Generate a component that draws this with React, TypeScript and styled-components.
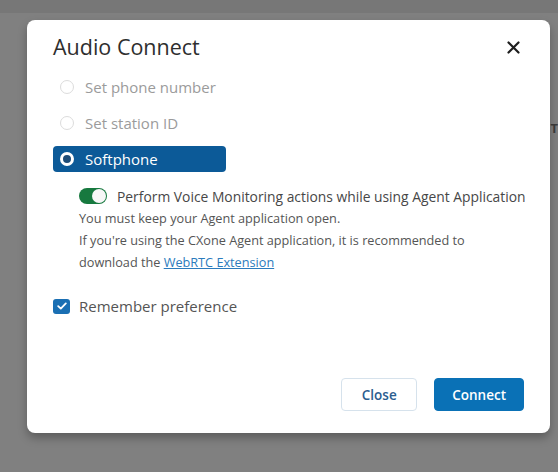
import React from "react";
import styled, { createGlobalStyle } from "styled-components";

const GlobalStyle = createGlobalStyle`
  html, body { margin: 0; padding: 0; }
  body {
    background: #808080;
    font-family: "Open Sans", "Noto Sans", sans-serif;
    -webkit-font-smoothing: antialiased;
  }
  * { box-sizing: border-box; }
`;

const Page = styled.div`
  position: relative;
  width: 558px;
  height: 472px;
  overflow: hidden;
  background: #808080;
`;

const TopBar = styled.div`
  height: 13px;
  background: #777777;
`;

const BackdropRow = styled.div`
  display: flex;
  justify-content: flex-end;
  padding-top: 107px;
  padding-right: 0;
  font-size: 13px;
  font-weight: 700;
  color: #3c3c3c;
  line-height: 16px;
`;

const Dialog = styled.div`
  position: absolute;
  left: 27px;
  top: 20px;
  width: 523px;
  height: 413px;
  background: #ffffff;
  border-radius: 8px;
  box-shadow: 0 5px 10px rgba(0, 0, 0, 0.28);
  display: flex;
  flex-direction: column;
  padding: 13px 26px 22px 26px;
`;

const Header = styled.div`
  display: flex;
  align-items: center;
  justify-content: space-between;
  height: 28px;
`;

const Title = styled.h2`
  margin: 0;
  font-size: 21.5px;
  line-height: 28px;
  font-weight: 500;
  color: #2e2e2e;
`;

const CloseIcon = styled.button`
  border: none;
  background: none;
  padding: 0;
  margin-right: 4px;
  width: 14px;
  height: 14px;
  display: flex;
  align-items: center;
  justify-content: center;
  cursor: pointer;
`;

const Options = styled.div`
  display: flex;
  flex-direction: column;
  gap: 10px;
  margin-top: 13px;
`;

const OptionRow = styled.div<{ $selected?: boolean }>`
  display: flex;
  align-items: center;
  gap: 11px;
  height: 26px;
  width: 173px;
  padding-left: 7px;
  border-radius: 4px;
  background: ${(p) => (p.$selected ? "#0c5a98" : "transparent")};
  color: ${(p) => (p.$selected ? "#ffffff" : "#9b9b9b")};
  font-size: 15px;
  white-space: nowrap;
`;

const RadioCircle = styled.span<{ $selected?: boolean }>`
  width: 14px;
  height: 14px;
  border-radius: 50%;
  flex-shrink: 0;
  background: ${(p) => (p.$selected ? "#1d4c78" : "#ffffff")};
  border: ${(p) => (p.$selected ? "3.5px solid #ffffff" : "1px solid #dcdcdc")};
`;

const Monitoring = styled.div`
  padding-left: 26px;
  margin-top: 16px;
  display: flex;
  flex-direction: column;
`;

const ToggleRow = styled.div`
  display: flex;
  align-items: center;
  gap: 10px;
  height: 16px;
  font-size: 13.85px;
  color: #474747;
  white-space: nowrap;
`;

const Switch = styled.span`
  position: relative;
  width: 28px;
  height: 16px;
  border-radius: 8px;
  background: #17793f;
  flex-shrink: 0;
  &::after {
    content: "";
    position: absolute;
    right: 1px;
    top: 1px;
    width: 14px;
    height: 14px;
    border-radius: 50%;
    background: #f7f7f7;
  }
`;

const Notes = styled.div`
  margin-top: 3px;
  font-size: 12.7px;
  line-height: 22px;
  color: #555555;
`;

const Note = styled.p`
  margin: 0;
  white-space: nowrap;
`;

const Link = styled.a`
  color: #2b7bbd;
  text-decoration: underline;
`;

const CheckRow = styled.label`
  display: flex;
  align-items: center;
  gap: 9px;
  height: 20px;
  margin-top: 23px;
  font-size: 15px;
  color: #555555;
`;

const CheckBox = styled.span`
  width: 17px;
  height: 15px;
  border-radius: 3px;
  background: #1a6fb3;
  display: flex;
  align-items: center;
  justify-content: center;
`;

const Footer = styled.div`
  margin-top: auto;
  display: flex;
  justify-content: flex-end;
  gap: 17px;
`;

const Button = styled.button<{ $primary?: boolean }>`
  height: 33px;
  padding: 0 ${(p) => (p.$primary ? "17px" : "19px")};
  min-width: ${(p) => (p.$primary ? "89px" : "76px")};
  border-radius: 4px;
  font-family: "Open Sans", sans-serif;
  font-size: 13.5px;
  font-weight: 600;
  cursor: pointer;
  background: ${(p) => (p.$primary ? "#0a71b6" : "#ffffff")};
  color: ${(p) => (p.$primary ? "#ffffff" : "#2b5d8f")};
  border: 1px solid ${(p) => (p.$primary ? "#0a71b6" : "#d6e2ec")};
`;

export default function App() {
  return (
    <>
      <GlobalStyle />
      <Page>
        <TopBar />
        <BackdropRow>T</BackdropRow>
        <Dialog>
          <Header>
            <Title>Audio Connect</Title>
            <CloseIcon aria-label="Close">
              <svg width="13" height="13" viewBox="0 0 13 13">
                <path d="M1.5 1.5 L11.5 11.5 M11.5 1.5 L1.5 11.5" stroke="#1e1e1e" strokeWidth="2.2" strokeLinecap="round" />
              </svg>
            </CloseIcon>
          </Header>
          <Options>
            <OptionRow>
              <RadioCircle />
              Set phone number
            </OptionRow>
            <OptionRow>
              <RadioCircle />
              Set station ID
            </OptionRow>
            <OptionRow $selected>
              <RadioCircle $selected />
              Softphone
            </OptionRow>
          </Options>
          <Monitoring>
            <ToggleRow>
              <Switch />
              Perform Voice Monitoring actions while using Agent Application
            </ToggleRow>
            <Notes>
              <Note>You must keep your Agent application open.</Note>
              <Note>If you're using the CXone Agent application, it is recommended to</Note>
              <Note>
                download the <Link href="#">WebRTC Extension</Link>
              </Note>
            </Notes>
          </Monitoring>
          <CheckRow>
            <CheckBox>
              <svg width="10" height="8" viewBox="0 0 10 8">
                <path d="M1.2 4.2 L3.8 6.6 L8.8 1.4" stroke="#ffffff" strokeWidth="1.8" fill="none" strokeLinecap="round" strokeLinejoin="round" />
              </svg>
            </CheckBox>
            Remember preference
          </CheckRow>
          <Footer>
            <Button>Close</Button>
            <Button $primary>Connect</Button>
          </Footer>
        </Dialog>
      </Page>
    </>
  );
}
